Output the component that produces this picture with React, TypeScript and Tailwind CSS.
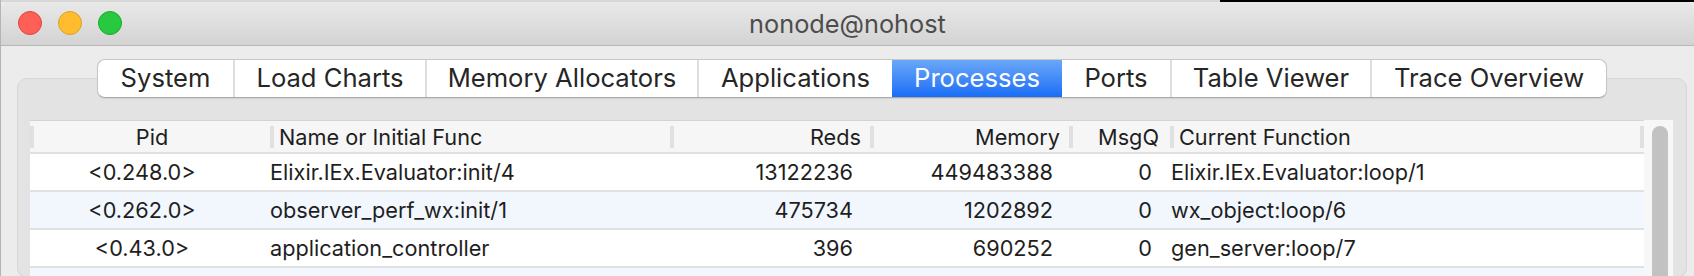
import React from "react";

const tabs = [
  { label: "System", w: "w-[137px]" },
  { label: "Load Charts", w: "w-[192px]" },
  { label: "Memory Allocators", w: "w-[272px]" },
  { label: "Applications", w: "w-[193px]" },
  { label: "Processes", w: "w-[170px]", active: true },
  { label: "Ports", w: "w-[110px]" },
  { label: "Table Viewer", w: "w-[200px]" },
  { label: "Trace Overview", w: "w-[234px]" },
];

const rows = [
  ["<0.248.0>", "Elixir.IEx.Evaluator:init/4", "13122236", "449483388", "0", "Elixir.IEx.Evaluator:loop/1"],
  ["<0.262.0>", "observer_perf_wx:init/1", "475734", "1202892", "0", "wx_object:loop/6"],
  ["<0.43.0>", "application_controller", "396", "690252", "0", "gen_server:loop/7"],
];

const cols = "grid grid-cols-[240px_400px_200px_199px_101px_1fr]";

function Sep() {
  return <span className="w-[4px] h-[22px] bg-[#e0e0e0] shrink-0"></span>;
}

export default function App() {
  return (
    <div className="w-[1694px] h-[276px] overflow-hidden bg-[#ececec] font-['Inter',sans-serif] text-[#1e1e1e] border-l border-[#b4b4b4]">
      {/* strip of the desktop behind the window */}
      <div className="flex h-[2px]">
        <div className="w-[1219px] bg-[#d8d8d8]"></div>
        <div className="flex-1 bg-black"></div>
      </div>

      {/* title bar */}
      <div className="relative h-[44px] flex items-center justify-center bg-gradient-to-b from-[#e9e9e9] to-[#d3d3d3] border-b border-[#b8b8b8] rounded-t-[8px]">
        <div className="absolute left-[17px] top-[9px] flex gap-[16px]">
          <span className="w-[24px] h-[24px] rounded-full bg-[#fe5f57] border border-[#e0443e]"></span>
          <span className="w-[24px] h-[24px] rounded-full bg-[#febc2e] border border-[#dea123]"></span>
          <span className="w-[24px] h-[24px] rounded-full bg-[#28c840] border border-[#1aab29]"></span>
        </div>
        <span className="text-[25.3px] text-[#4d4d4d]">nonode@nohost</span>
      </div>

      <div className="pl-[16px] pr-[7px] pt-[13px]">
        {/* tabs */}
        <div className="relative z-10 flex justify-center mb-[-20px]">
          <div className="flex h-[39px] bg-white rounded-[8px] border border-[#c6c6c6] border-b-[#ababab] overflow-hidden shadow-[0_1px_1px_rgba(0,0,0,0.08)]">
            {tabs.map((t, i) => (
              <div
                key={t.label}
                className={
                  "flex items-center justify-center text-[25.6px] " +
                  t.w +
                  (t.active
                    ? " bg-gradient-to-b from-[#6aa7f9] to-[#176cf6] text-white"
                    : " text-[#262626]") +
                  (i < tabs.length - 1 && !t.active && !tabs[i + 1].active ? " border-r-2 border-[#dedede]" : "")
                }
              >
                {t.label}
              </div>
            ))}
          </div>
        </div>

        {/* notebook page */}
        <div className="h-[200px] bg-[#e3e3e3] border border-[#d6d6d6] rounded-[10px] pt-[41px] pl-[12px] pr-[13px] flex">
          <div className="flex-1 bg-white text-[21.7px]">
            <div className={`${cols} h-[34px] bg-[#f6f6f6] border-t border-[#d4d4d4] border-b-2 border-b-[#e0e0e0]`}>
              <div className="flex items-center">
                <Sep />
                <span className="flex-1 text-center">Pid</span>
              </div>
              <div className="flex items-center">
                <Sep />
                <span className="pl-[5px]">Name or Initial Func</span>
              </div>
              <div className="flex items-center">
                <Sep />
                <span className="flex-1 text-right pr-[9px]">Reds</span>
              </div>
              <div className="flex items-center">
                <Sep />
                <span className="flex-1 text-right pr-[9px]">Memory</span>
              </div>
              <div className="flex items-center">
                <Sep />
                <span className="flex-1 text-right pr-[11px]">MsgQ</span>
              </div>
              <div className="flex items-center">
                <Sep />
                <span className="flex-1 pl-[5px]">Current Function</span>
                <Sep />
              </div>
            </div>

            {rows.map((r, i) => (
              <div
                key={r[0]}
                className={`${cols} h-[38px] items-center border-b-2 border-[#e1e1e1] ${i % 2 === 1 ? "bg-[#f2f7fe]" : "bg-white"}`}
              >
                <span className="text-center pr-[16px]">{r[0]}</span>
                <span>{r[1]}</span>
                <span className="text-right pr-[17px]">{r[2]}</span>
                <span className="text-right pr-[16px]">{r[3]}</span>
                <span className="text-right pr-[18px]">{r[4]}</span>
                <span className="pl-[1px]">{r[5]}</span>
              </div>
            ))}
            <div className="h-[38px] bg-[#f2f7fe]"></div>
          </div>

          {/* scrollbar */}
          <div className="w-[29px] bg-[#f7f7f7] pt-[6px] pl-[8px]">
            <div className="w-[16px] h-[190px] rounded-full bg-[#c2c2c2]"></div>
          </div>
        </div>
      </div>
    </div>
  );
}
